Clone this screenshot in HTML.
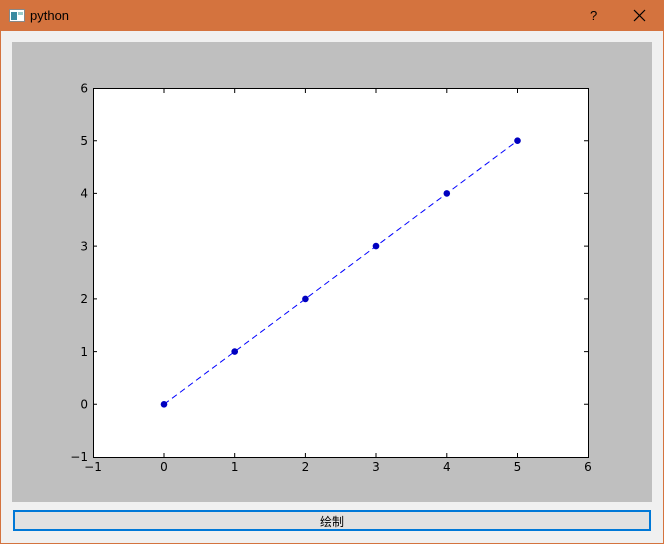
<!DOCTYPE html>
<html><head><meta charset="utf-8"><style>
body{margin:0;width:664px;height:544px;overflow:hidden;background:#f0f0f0;font-family:"Liberation Sans","Noto Sans CJK SC",sans-serif;}
.win{position:absolute;left:0;top:0;width:662px;height:543px;border:1px solid #d4733e;border-top:none;background:#f0f0f0}
.title{position:absolute;left:0;top:0;width:664px;height:31px;background:#d4733e;}
.gray{position:absolute;left:12px;top:42px;width:640px;height:460px;background:#bfbfbf}
.btn{position:absolute;left:13px;top:510px;width:634px;height:17px;border:2px solid #0078d7;background:#e1e1e1;font-size:12px;text-align:center;line-height:21px;color:#000}
</style></head><body>
<div class="win"></div>
<div class="title">
<svg width="664" height="31" style="position:absolute;left:0;top:0">
<rect x="9.5" y="9.5" width="15" height="12" fill="#fff" stroke="#888"/>
<rect x="11" y="12" width="6" height="8" fill="#3a8aa0"/>
<rect x="18" y="12" width="5" height="3" fill="#9cc"/>
<text x="30" y="20" font-size="13" font-family="Liberation Sans" fill="#000">python</text>
<text x="590" y="20" font-size="13" font-family="Liberation Sans" fill="#000">?</text>
<path d="M634 10 L645 21 M645 10 L634 21" stroke="#000" stroke-width="1.2"/>
</svg></div>
<div class="gray"></div>
<svg width="664" height="544" style="position:absolute;left:0;top:0" font-family="DejaVu Sans" font-size="12">
<rect x="93.5" y="88.5" width="495" height="369" fill="#fff" stroke="#000"/>
<g stroke="#000">
<path d="M164 457v-4M234.7 457v-4M305.4 457v-4M376 457v-4M446.8 457v-4M517.5 457v-4M164 89v4M234.7 89v4M305.4 89v4M376 89v4M446.8 89v4M517.5 89v4"/>
<path d="M93 404.3h4M93 351.6h4M93 298.9h4M93 246.1h4M93 193.4h4M93 140.7h4M588 404.3h-4M588 351.6h-4M588 298.9h-4M588 246.1h-4M588 193.4h-4M588 140.7h-4"/>
</g>
<g text-anchor="middle">
<text x="93" y="471">−1</text><text x="164" y="471">0</text><text x="234.7" y="471">1</text><text x="305.4" y="471">2</text><text x="376" y="471">3</text><text x="446.8" y="471">4</text><text x="517.5" y="471">5</text><text x="588" y="471">6</text>
</g>
<g text-anchor="end">
<text x="88" y="461">−1</text><text x="88" y="408.5">0</text><text x="88" y="356">1</text><text x="88" y="303">2</text><text x="88" y="250.5">3</text><text x="88" y="197.5">4</text><text x="88" y="145">5</text><text x="88" y="92.5">6</text>
</g>
<path d="M164 404.3L517.5 140.7" stroke="#00f" stroke-dasharray="6,4" fill="none"/>
<g fill="#0000c0">
<circle cx="164" cy="404.3" r="3.3"/><circle cx="234.7" cy="351.6" r="3.3"/><circle cx="305.4" cy="298.9" r="3.3"/><circle cx="376" cy="246.1" r="3.3"/><circle cx="446.8" cy="193.4" r="3.3"/><circle cx="517.5" cy="140.7" r="3.3"/>
</g>
</svg>
<div class="btn">绘制</div>
</body></html>
